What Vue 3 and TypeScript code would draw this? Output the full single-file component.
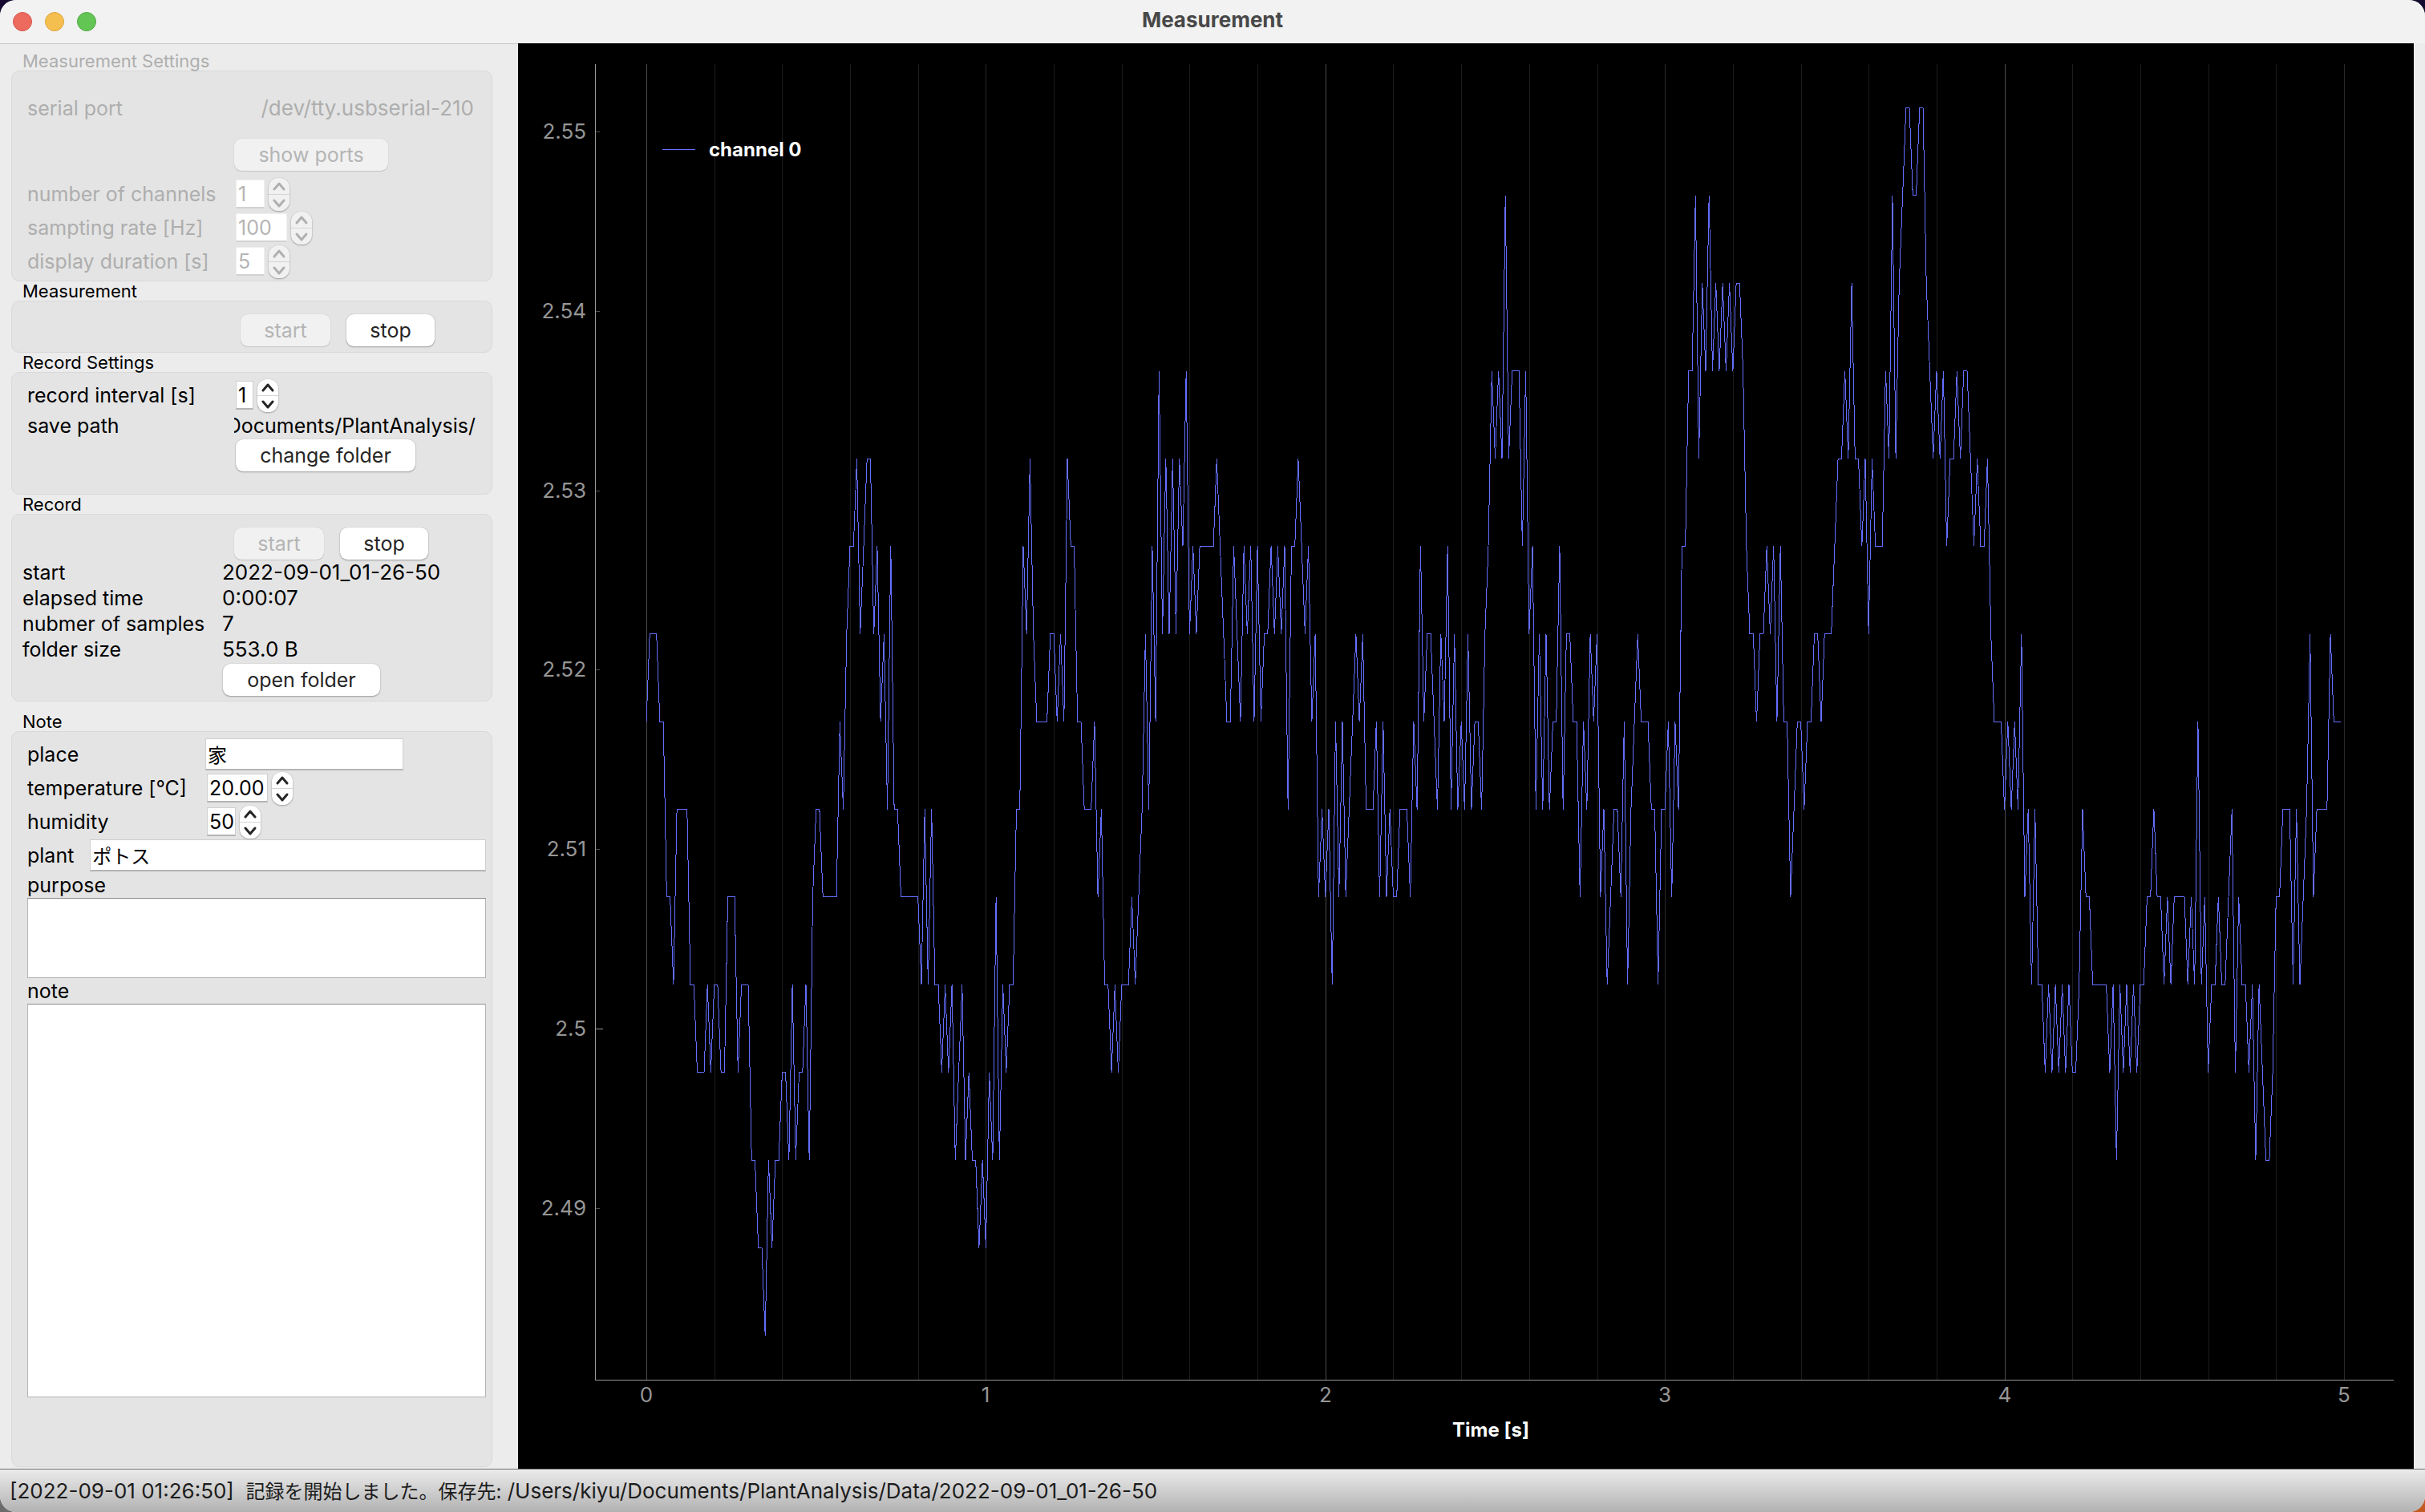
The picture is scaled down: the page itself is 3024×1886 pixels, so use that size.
<script setup lang="ts">
import { computed, reactive, ref } from 'vue'

interface Spin {
  id: string
  label: string
  value: string
  step: number
  digits: number
  size: string
}

const settings = reactive<Spin[]>([
  { id: 'channels', label: 'number of channels', value: '1', step: 1, digits: 0, size: 'w-short' },
  { id: 'rate', label: 'sampting rate [Hz]', value: '100', step: 1, digits: 0, size: 'w-long' },
  { id: 'duration', label: 'display duration [s]', value: '5', step: 1, digits: 0, size: 'w-short' },
])

const interval = reactive<Spin[]>([
  { id: 'interval', label: 'record interval [s]', value: '1', step: 1, digits: 0, size: 'w-digit' },
])

const climate = reactive<Spin[]>([
  { id: 'temperature', label: 'temperature [°C]', value: '20.00', step: 1, digits: 2, size: 'w-decimal' },
  { id: 'humidity', label: 'humidity', value: '50', step: 1, digits: 0, size: 'w-short' },
])

function bump(spin: Spin, direction: number) {
  spin.value = (Number(spin.value) + direction * spin.step).toFixed(spin.digits)
}

const place = ref('家')
const plant = ref('ポトス')
const purpose = ref('')
const note = ref('')

const recordInfo = [
  { label: 'start', value: '2022-09-01_01-26-50' },
  { label: 'elapsed time', value: '0:00:07' },
  { label: 'nubmer of samples', value: '7' },
  { label: 'folder size', value: '553.0 B' },
]

// One hex digit per 10 ms sample: ADC steps above the base reading of 508.
const samples =
  '78887755466664433343443355534442211021223324233425' +
  '665555576899a89aa897869665555554646443434234232212' +
  '1325243446698a8777788787a9977666756443434445456869' +
  '7b8a8a8a9b89899999a9877987989797889898969' +
  '9a9897856' +
  '56475756787866675756556665769788768796867686776' +
  '89babadabbb9b89686867796887757687856456657467877766' +
  '466757699bbdacbdbcbcbcbccb98878898979775677677887888' +
  '9aabacaa9a8a999badacdeeddeecbabab9aababba9a99a8777' +
  '67676856464434343434334655444443424343434455655454' +
  '55554547453445445635443424322355666464568566668777'

const ADC_BASE = 508
const VOLTS_PER_STEP = 5 / 1023

const view = { width: 2364, height: 1778 }
const frame = { left: 96, right: 2339, top: 26, bottom: 1667 }

const xAt = (seconds: number) => 160 + seconds * 423.4
const yAt = (volts: number) => 1229 - (volts - 2.5) * 22380

const trace = computed(() =>
  Array.from(samples)
    .map((digit, i) => {
      const volts = (ADC_BASE + parseInt(digit, 16)) * VOLTS_PER_STEP
      return `${xAt(i / 100).toFixed(1)},${yAt(volts).toFixed(1)}`
    })
    .join(' '),
)

const gridLines = Array.from({ length: 26 }, (_, i) => ({
  x: Math.round(xAt(i / 5)),
  tone: i % 10 === 0 ? 'major' : i % 5 === 0 ? 'middle' : 'minor',
}))

const timeTicks = [0, 1, 2, 3, 4, 5].map((s) => ({ x: Math.round(xAt(s)), text: String(s) }))
const voltTicks = [2.55, 2.54, 2.53, 2.52, 2.51, 2.5, 2.49].map((v) => ({
  y: Math.round(yAt(v)),
  text: String(v),
  length: v === 2.5 ? 10 : 6,
}))
</script>

<template>
  <div class="desktop">
    <div class="window">
      <header class="titlebar">
        <div class="lights">
          <button type="button" class="light close" aria-label="Close"></button>
          <button type="button" class="light minimize" aria-label="Minimize"></button>
          <button type="button" class="light expand" aria-label="Zoom"></button>
        </div>
        <h1>Measurement</h1>
      </header>

      <main class="body">
        <aside class="sidebar">
          <section class="group disabled">
            <h2>Measurement Settings</h2>
            <div class="box settings">
              <div class="row serial">
                <span class="name">serial port</span>
                <span class="port">/dev/tty.usbserial-210</span>
              </div>
              <div class="row ports">
                <span class="name"></span>
                <button type="button" class="push w-ports" disabled>show ports</button>
              </div>
              <div v-for="s in settings" :key="s.id" class="row">
                <label class="name" :for="s.id">{{ s.label }}</label>
                <input :id="s.id" v-model="s.value" class="field spin" :class="s.size" type="text" disabled />
                <span class="stepper">
                  <button type="button" aria-label="Increase" disabled>
                    <svg viewBox="0 0 26 20"><path d="M7 14 L13 7 L19 14" /></svg>
                  </button>
                  <button type="button" aria-label="Decrease" disabled>
                    <svg viewBox="0 0 26 20"><path d="M7 7 L13 14 L19 7" /></svg>
                  </button>
                </span>
              </div>
            </div>
          </section>

          <section class="group">
            <h2>Measurement</h2>
            <div class="box run">
              <button type="button" class="push w-start" disabled>start</button>
              <button type="button" class="push w-stop">stop</button>
            </div>
          </section>

          <section class="group">
            <h2>Record Settings</h2>
            <div class="box record-settings">
              <div v-for="s in interval" :key="s.id" class="row">
                <label class="name" :for="s.id">{{ s.label }}</label>
                <input :id="s.id" v-model="s.value" class="field spin" :class="s.size" type="text" />
                <span class="stepper">
                  <button type="button" aria-label="Increase" @click="bump(s, 1)">
                    <svg viewBox="0 0 26 20"><path d="M7 14 L13 7 L19 14" /></svg>
                  </button>
                  <button type="button" aria-label="Decrease" @click="bump(s, -1)">
                    <svg viewBox="0 0 26 20"><path d="M7 7 L13 14 L19 7" /></svg>
                  </button>
                </span>
              </div>
              <div class="row path">
                <span class="name">save path</span>
                <span class="clipped"><span>Documents/PlantAnalysis/</span></span>
              </div>
              <div class="row">
                <span class="name"></span>
                <button type="button" class="push w-change">change folder</button>
              </div>
            </div>
          </section>

          <section class="group">
            <h2>Record</h2>
            <div class="box record">
              <div class="run-buttons">
                <button type="button" class="push w-start" disabled>start</button>
                <button type="button" class="push w-stop">stop</button>
              </div>
              <dl>
                <div v-for="item in recordInfo" :key="item.label">
                  <dt>{{ item.label }}</dt>
                  <dd>{{ item.value }}</dd>
                </div>
              </dl>
              <div class="open">
                <button type="button" class="push w-open">open folder</button>
              </div>
            </div>
          </section>

          <section class="group note-group">
            <h2>Note</h2>
            <div class="box notes">
              <div class="row">
                <label class="name" for="place">place</label>
                <input id="place" v-model="place" class="field line w-place" type="text" />
              </div>
              <div v-for="s in climate" :key="s.id" class="row">
                <label class="name" :for="s.id">{{ s.label }}</label>
                <input :id="s.id" v-model="s.value" class="field spin" :class="s.size" type="text" />
                <span class="stepper">
                  <button type="button" aria-label="Increase" @click="bump(s, 1)">
                    <svg viewBox="0 0 26 20"><path d="M7 14 L13 7 L19 14" /></svg>
                  </button>
                  <button type="button" aria-label="Decrease" @click="bump(s, -1)">
                    <svg viewBox="0 0 26 20"><path d="M7 7 L13 14 L19 7" /></svg>
                  </button>
                </span>
              </div>
              <div class="row plant">
                <label class="name" for="plant">plant</label>
                <input id="plant" v-model="plant" class="field line" type="text" />
              </div>
              <label class="above" for="purpose">purpose</label>
              <textarea id="purpose" v-model="purpose" class="purpose"></textarea>
              <label class="above" for="note">note</label>
              <textarea id="note" v-model="note" class="note"></textarea>
            </div>
          </section>
        </aside>

        <div class="plot">
          <svg :viewBox="`0 0 ${view.width} ${view.height}`" role="img" aria-label="channel 0">
            <g class="crisp">
              <line
                v-for="g in gridLines"
                :key="g.x"
                :class="g.tone"
                :x1="g.x"
                :x2="g.x"
                :y1="frame.top"
                :y2="frame.bottom"
              />
              <line
                v-for="t in voltTicks"
                :key="t.text"
                :class="t.length > 6 ? 'tick-major' : 'tick'"
                :x1="frame.left"
                :x2="frame.left + t.length"
                :y1="t.y"
                :y2="t.y"
              />
              <line class="axis" :x1="frame.left" :x2="frame.left" :y1="frame.top" :y2="frame.bottom" />
              <line class="axis" :x1="frame.left" :x2="frame.right" :y1="frame.bottom" :y2="frame.bottom" />
              <polyline class="trace" :points="trace" />
              <line class="trace" x1="180" x2="221" y1="132" y2="132" />
            </g>
            <text v-for="t in voltTicks" :key="t.text" class="number" x="85" :y="t.y + 9" text-anchor="end">
              {{ t.text }}
            </text>
            <text v-for="t in timeTicks" :key="t.text" class="number" :x="t.x" y="1695" text-anchor="middle">
              {{ t.text }}
            </text>
            <text class="strong" x="238" y="141">channel 0</text>
            <text class="strong" x="1213" y="1738" text-anchor="middle">Time [s]</text>
          </svg>
        </div>
      </main>

      <footer class="status">
        [2022-09-01 01:26:50]&nbsp; <span lang="ja">記録を開始しました。保存先:</span>
        /Users/kiyu/Documents/PlantAnalysis/Data/2022-09-01_01-26-50
      </footer>
    </div>
  </div>
</template>

<style>
body {
  margin: 0;
}
</style>

<style scoped>
* {
  box-sizing: border-box;
}

.desktop {
  min-height: 100vh;
  display: flex;
  background:
    linear-gradient(to bottom, #150a30 50%, transparent 50%),
    linear-gradient(to right, #6b6b6b 50%, #c25a22 50%);
  font-family: Inter, 'Noto Sans CJK JP', sans-serif;
  font-size: 25px;
  line-height: 32px;
  color: #000;
}

.window {
  flex: 1;
  display: flex;
  flex-direction: column;
  min-width: 0;
  overflow: hidden;
  border-radius: 20px;
  background: #ececec;
}

.titlebar {
  display: grid;
  grid-template-columns: 1fr auto 1fr;
  align-items: center;
  height: 54px;
  padding: 0 16px;
  background: #f2f2f2;
}

.titlebar h1 {
  margin: 0;
  padding-bottom: 4px;
  font-size: 26px;
  font-weight: 700;
  line-height: 32px;
  color: #484848;
}

.lights {
  display: flex;
  gap: 16px;
}

.light {
  width: 24px;
  height: 24px;
  padding: 0;
  border: 1px solid;
  border-radius: 50%;
}

.close {
  background: #ed6a5f;
  border-color: #d8564c;
}

.minimize {
  background: #f5bf4f;
  border-color: #dba43a;
}

.expand {
  background: #62c554;
  border-color: #4fab41;
}

.body {
  flex: 1;
  display: flex;
  min-height: 0;
  padding-right: 14px;
}

.sidebar {
  flex: none;
  display: flex;
  flex-direction: column;
  width: 646px;
  padding: 9px 32px 2px 14px;
  border-top: 1px solid #c8c8c8;
}

.group h2 {
  margin: 0;
  padding-left: 14px;
  font-size: 22px;
  font-weight: 400;
  line-height: 24px;
}

.disabled {
  color: #aeaeae;
}

.box {
  border: 1px solid #d9d9d9;
  border-radius: 10px;
  background: #e4e4e4;
}

.row {
  display: flex;
  align-items: center;
  height: 42px;
}

.name {
  flex: none;
  width: 258px;
  white-space: nowrap;
}

.settings {
  padding: 16px 22px 3px 19px;
}

.settings .serial {
  height: 60px;
}

.settings .ports {
  height: 56px;
}

.port {
  flex: 1;
  font-size: 26px;
  text-align: right;
}

.push {
  height: 40px;
  padding: 0;
  border: 0;
  border-radius: 9px;
  background: #fff;
  box-shadow:
    0 0 1px rgba(0, 0, 0, 0.3),
    0 1px 2px rgba(0, 0, 0, 0.3);
  font: inherit;
  color: #262626;
}

.push:disabled {
  background: #f1f1f1;
  box-shadow:
    0 0 1px rgba(0, 0, 0, 0.2),
    0 1px 1px rgba(0, 0, 0, 0.12);
  color: #b5b5b5;
}

.w-start {
  width: 112px;
}

.w-stop {
  width: 110px;
}

.w-ports {
  width: 192px;
}

.w-change {
  width: 224px;
  margin-left: 2px;
}

.w-open {
  width: 196px;
}

.field {
  border: 1px solid #cfcfcf;
  border-bottom: 2px solid #b4b4b4;
  border-radius: 0;
  background: #fff;
  font: inherit;
  color: #000;
}

.field:disabled {
  border-color: #efefef #efefef #d2d2d2;
  color: #b5b5b5;
}

.spin {
  height: 36px;
  margin: 0 5px 0 2px;
  padding: 0 0 0 2px;
}

.w-digit {
  width: 22px;
}

.w-short {
  width: 36px;
}

.w-long {
  width: 64px;
}

.w-decimal {
  width: 76px;
}

.line {
  height: 40px;
  padding: 0 2px;
  font-size: 24px;
}

.w-place {
  width: 247px;
}

.stepper {
  display: flex;
  flex-direction: column;
  width: 26px;
  height: 41px;
  overflow: hidden;
  border-radius: 12px;
  box-shadow:
    0 0 1px rgba(0, 0, 0, 0.3),
    0 1px 2px rgba(0, 0, 0, 0.3);
}

.stepper button {
  flex: 1;
  display: flex;
  padding: 0;
  border: 0;
  background: #fff;
}

.stepper button:first-child {
  border-bottom: 1px solid #d4d4d4;
}

.stepper button:disabled {
  background: #f1f1f1;
}

.stepper svg {
  width: 26px;
  height: 20px;
  fill: none;
  stroke: #262626;
  stroke-width: 3;
  stroke-linecap: round;
  stroke-linejoin: round;
}

.stepper button:disabled svg {
  stroke: #b0b0b0;
}

.run {
  display: flex;
  gap: 20px;
  padding: 16px 0 7px 285px;
}

.record-settings {
  padding: 7px 20px 27px 19px;
}

.record-settings .path {
  height: 33px;
}

.clipped {
  flex: 1;
  display: flex;
  justify-content: flex-end;
  min-width: 0;
  overflow: hidden;
}

.record {
  padding: 16px 0 6px 13px;
}

.run-buttons {
  display: flex;
  gap: 20px;
  padding-left: 264px;
}

.record dl {
  margin: 0;
}

.record dl div {
  display: flex;
}

.record dt {
  width: 249px;
}

.record dd {
  width: 274px;
  margin: 0;
  overflow: hidden;
  font-size: 26px;
  white-space: nowrap;
}

.open {
  padding: 2px 0 0 250px;
}

.open .push {
  display: block;
}

.note-group {
  flex: 1;
  display: flex;
  flex-direction: column;
  margin-top: 13px;
}

.notes {
  flex: 1;
  display: flex;
  flex-direction: column;
  padding: 7px 7px 86px 19px;
}

.notes .name {
  width: 222px;
}

.notes .plant {
  gap: 20px;
}

.notes .plant .name {
  width: auto;
}

.plant .line {
  flex: 1;
  min-width: 0;
}

.above {
  line-height: 32px;
}

textarea {
  width: 100%;
  padding: 4px;
  border: 1px solid #b4b4b4;
  border-top: 1px solid #8c8c8c;
  border-radius: 0;
  background: #fff;
  font: inherit;
  resize: none;
}

.purpose {
  height: 100px;
}

.note {
  flex: 1;
}

.plot {
  flex: 1;
  min-width: 0;
  background: #000;
}

.plot svg {
  display: block;
  width: 100%;
  height: 100%;
}

.crisp {
  shape-rendering: crispEdges;
  stroke-width: 1;
  fill: none;
}

.major {
  stroke: #4c4c4c;
}

.middle {
  stroke: #2a2a2a;
}

.minor {
  stroke: #1c1c1c;
}

.tick {
  stroke: #4c4c4c;
}

.tick-major,
.axis {
  stroke: #969696;
}

.trace {
  stroke: #646eff;
}

.number {
  font-size: 26px;
  fill: #969696;
}

.strong {
  font-size: 24px;
  font-weight: 700;
  fill: #fff;
}

.status {
  height: 54px;
  padding: 0 12px;
  border-top: 1px solid #6e6e6e;
  background: linear-gradient(to bottom, #ebebeb, #b2b2b2);
  font-size: 26px;
  line-height: 54px;
  color: #1c1c1c;
  white-space: nowrap;
}

.status span {
  font-size: 24px;
}
</style>
